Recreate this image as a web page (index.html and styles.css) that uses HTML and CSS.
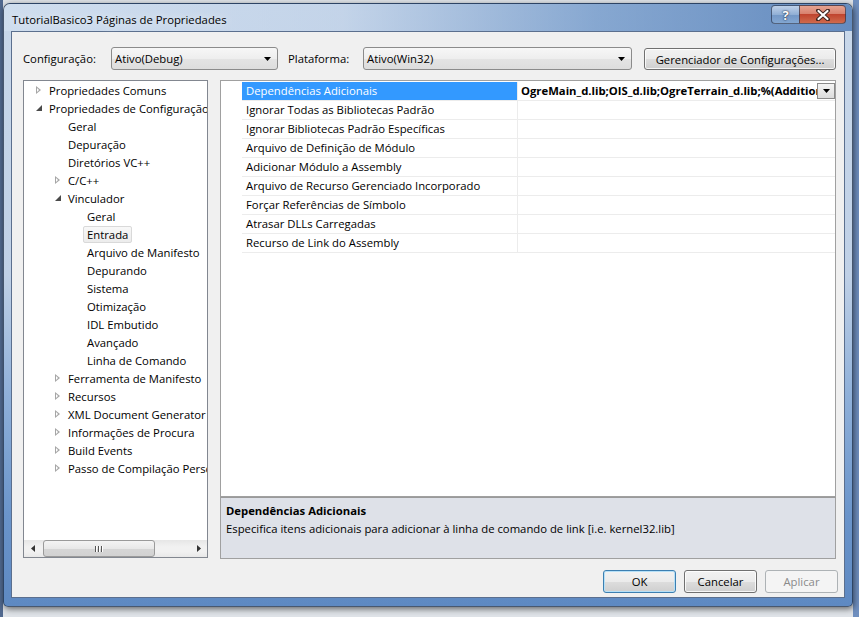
FILE: index.html
```html
<!DOCTYPE html>
<html lang="pt">

<head>
    <meta charset="UTF-8">
    <title>TutorialBasico3 Páginas de Propriedades</title>
    <link rel="stylesheet" href="styles.css">
</head>

<body>

    <div class="window">
        <div class="titlebar">
            <span class="title">TutorialBasico3 Páginas de Propriedades</span>
            <div class="caption_btns">
                <span class="cap help">?</span>
                <span class="cap close">
                    <svg width="14" height="12" viewBox="0 0 14 12">
                        <path d="M2 1.5 L12 10.5 M12 1.5 L2 10.5" stroke="#3b2420" stroke-width="4" stroke-linecap="round" />
                        <path d="M2.5 2 L11.5 10 M11.5 2 L2.5 10" stroke="#fff" stroke-width="2.2" stroke-linecap="round" />
                    </svg>
                </span>
            </div>
        </div>

        <div class="client">
            <div class="toolbar">
                <label class="lbl_config">Configuração:</label>
                <div class="combo combo_config">
                    <span>Ativo(Debug)</span>
                    <svg width="7" height="4" viewBox="0 0 7 4"><path d="M0 0 H7 L3.5 4 Z" fill="#000" /></svg>
                </div>
                <label class="lbl_plat">Plataforma:</label>
                <div class="combo combo_plat">
                    <span>Ativo(Win32)</span>
                    <svg width="7" height="4" viewBox="0 0 7 4"><path d="M0 0 H7 L3.5 4 Z" fill="#000" /></svg>
                </div>
                <button class="btn btn_manager">Gerenciador de Configurações...</button>
            </div>

            <div class="main">
                <div class="tree">
                    <ul class="tree_items">
                        <li class="lvl0"><span class="exp closed"></span>Propriedades Comuns</li>
                        <li class="lvl0"><span class="exp open"></span>Propriedades de Configuração</li>
                        <li class="lvl1"><span class="exp"></span>Geral</li>
                        <li class="lvl1"><span class="exp"></span>Depuração</li>
                        <li class="lvl1"><span class="exp"></span>Diretórios VC++</li>
                        <li class="lvl1"><span class="exp closed"></span>C/C++</li>
                        <li class="lvl1"><span class="exp open"></span>Vinculador</li>
                        <li class="lvl2"><span class="exp"></span>Geral</li>
                        <li class="lvl2"><span class="exp"></span><span class="sel">Entrada</span></li>
                        <li class="lvl2"><span class="exp"></span>Arquivo de Manifesto</li>
                        <li class="lvl2"><span class="exp"></span>Depurando</li>
                        <li class="lvl2"><span class="exp"></span>Sistema</li>
                        <li class="lvl2"><span class="exp"></span>Otimização</li>
                        <li class="lvl2"><span class="exp"></span>IDL Embutido</li>
                        <li class="lvl2"><span class="exp"></span>Avançado</li>
                        <li class="lvl2"><span class="exp"></span>Linha de Comando</li>
                        <li class="lvl1"><span class="exp closed"></span>Ferramenta de Manifesto</li>
                        <li class="lvl1"><span class="exp closed"></span>Recursos</li>
                        <li class="lvl1"><span class="exp closed"></span>XML Document Generator</li>
                        <li class="lvl1"><span class="exp closed"></span>Informações de Procura</li>
                        <li class="lvl1"><span class="exp closed"></span>Build Events</li>
                        <li class="lvl1"><span class="exp closed"></span>Passo de Compilação Personalizada</li>
                    </ul>
                    <div class="hscroll">
                        <span class="sb_arrow">
                            <svg width="4" height="7" viewBox="0 0 4 7"><path d="M4 0 V7 L0 3.5 Z" fill="#333" /></svg>
                        </span>
                        <span class="sb_thumb"><i></i><i></i><i></i></span>
                        <span class="sb_track"></span>
                        <span class="sb_arrow">
                            <svg width="4" height="7" viewBox="0 0 4 7"><path d="M0 0 V7 L4 3.5 Z" fill="#333" /></svg>
                        </span>
                    </div>
                </div>

                <div class="props">
                    <div class="grid">
                        <div class="grid_row selected">
                            <div class="name">Dependências Adicionais</div>
                            <div class="value">
                                <span class="value_text">OgreMain_d.lib;OIS_d.lib;OgreTerrain_d.lib;%(AdditionalDependencies)</span>
                                <span class="drop">
                                    <svg width="7" height="4" viewBox="0 0 7 4"><path d="M0 0 H7 L3.5 4 Z" fill="#000" /></svg>
                                </span>
                            </div>
                        </div>
                        <div class="grid_row"><div class="name">Ignorar Todas as Bibliotecas Padrão</div><div class="value"></div></div>
                        <div class="grid_row"><div class="name">Ignorar Bibliotecas Padrão Específicas</div><div class="value"></div></div>
                        <div class="grid_row"><div class="name">Arquivo de Definição de Módulo</div><div class="value"></div></div>
                        <div class="grid_row"><div class="name">Adicionar Módulo a Assembly</div><div class="value"></div></div>
                        <div class="grid_row"><div class="name">Arquivo de Recurso Gerenciado Incorporado</div><div class="value"></div></div>
                        <div class="grid_row"><div class="name">Forçar Referências de Símbolo</div><div class="value"></div></div>
                        <div class="grid_row"><div class="name">Atrasar DLLs Carregadas</div><div class="value"></div></div>
                        <div class="grid_row"><div class="name">Recurso de Link do Assembly</div><div class="value"></div></div>
                    </div>
                    <div class="desc">
                        <div class="desc_title">Dependências Adicionais</div>
                        <div class="desc_text">Especifica itens adicionais para adicionar à linha de comando de link [i.e. kernel32.lib]</div>
                    </div>
                </div>
            </div>

            <div class="footer">
                <button class="btn btn_default">OK</button>
                <button class="btn">Cancelar</button>
                <button class="btn" disabled>Aplicar</button>
            </div>
        </div>
    </div>

</body>

</html>
```

FILE: styles.css
```css
body {
    margin: 0;
    padding: 3px 0 0 3px;
    width: 859px;
    height: 617px;
    box-sizing: border-box;
    overflow: hidden;
    font-family: "Open Sans", "Noto Sans", sans-serif;
    font-size: 11.3px;
    color: #000;
    background: linear-gradient(90deg, #51698f 0px, #51698f 3px, #dfe3e8 3px, #dfe3e8 853px, #6f8fbf 853px);
}

.window {
    width: 850px;
    height: 604px;
    box-sizing: border-box;
    padding: 0 7px;
    border: 1px solid rgba(30, 45, 70, 0.75);
    border-radius: 7px 7px 5px 5px;
    background: linear-gradient(180deg, #c9d8ea 0%, #bfd0e6 45%, #8fb0d9 65%, #6a94ca 85%, #5e89c2 100%);
    box-shadow: 1px 2px 6px rgba(0, 0, 0, 0.55);
}

.titlebar {
    display: flex;
    height: 27px;
    margin: 0 -7px;
    padding: 0 6px 0 8px;
    border-radius: 6px 6px 0 0;
    background: linear-gradient(90deg, rgba(210, 224, 240, 0.7) 0%, rgba(190, 208, 232, 0.5) 40%, rgba(90, 135, 192, 0.6) 70%, rgba(75, 120, 180, 0.8) 100%);
}

.title {
    padding-top: 8px;
    font-size: 11.3px;
    color: #000;
    text-shadow: 0 0 8px rgba(255, 255, 255, 0.9);
}

.caption_btns {
    display: flex;
    margin-left: auto;
    margin-top: 1px;
    height: 19px;
}

.cap {
    display: flex;
    align-items: center;
    justify-content: center;
    height: 19px;
    box-sizing: border-box;
    border: 1px solid rgba(40, 55, 80, 0.7);
}

.help {
    width: 28px;
    border-radius: 4px 0 0 4px;
    border-right: none;
    background: linear-gradient(180deg, rgba(225, 235, 248, 0.7) 0%, rgba(170, 195, 225, 0.6) 50%, rgba(120, 155, 200, 0.6) 51%, rgba(140, 175, 215, 0.7) 100%);
    color: #fff;
    font-weight: bold;
    font-size: 13px;
    text-shadow: 0 0 2px #1c2a40, 0 0 1px #1c2a40;
}

.close {
    width: 47px;
    border-radius: 0 4px 4px 0;
    background: linear-gradient(180deg, #e6a391 0%, #d8826e 45%, #c0452f 50%, #cf6a4c 100%);
}

.client {
    height: 567px;
    box-sizing: border-box;
    border: 1px solid #5b6f8e;
    background: #f0f0f0;
    padding: 15px 0 0 11px;
}

.toolbar {
    display: flex;
    align-items: center;
    height: 23px;
}

.toolbar label {
    display: block;
}

.lbl_config {
    width: 88px;
}

.lbl_plat {
    width: 75px;
    margin-left: 10px;
}

.combo {
    display: flex;
    align-items: center;
    justify-content: space-between;
    height: 23px;
    box-sizing: border-box;
    padding: 0 6px 0 3px;
    border: 1px solid #8b8b8b;
    border-radius: 3px;
    background: linear-gradient(180deg, #f7f7f7 0%, #eeeeee 50%, #e4e4e4 51%, #dddddd 100%);
}

.combo_config {
    width: 167px;
}

.combo_plat {
    width: 269px;
}

.btn {
    height: 23px;
    box-sizing: border-box;
    padding: 0;
    font-family: inherit;
    font-size: 11.3px;
    color: #000;
    border: 1px solid #707070;
    border-radius: 3px;
    background: linear-gradient(180deg, #f2f2f2 0%, #ebebeb 50%, #dddddd 51%, #cfcfcf 100%);
    box-shadow: inset 0 0 0 1px rgba(255, 255, 255, 0.8);
}

.btn_manager {
    width: 192px;
    height: 22px;
    margin-left: 12px;
    margin-top: 1px;
}

.main {
    display: flex;
    align-items: flex-start;
    margin-top: 10px;
}

.tree {
    display: flex;
    flex-direction: column;
    width: 185px;
    height: 478px;
    box-sizing: border-box;
    border: 1px solid #828790;
    background: #fff;
    overflow: hidden;
}

.tree_items {
    flex: 1;
    margin: 0;
    padding: 0;
    list-style: none;
    overflow: hidden;
}

.tree_items li {
    display: flex;
    align-items: center;
    height: 18px;
    white-space: nowrap;
}

.lvl0 {
    padding-left: 12px;
}

.lvl1 {
    padding-left: 31px;
}

.lvl2 {
    padding-left: 50px;
}

.exp {
    flex: none;
    width: 13px;
    height: 18px;
    position: relative;
}

.exp.closed::before {
    content: "";
    position: absolute;
    left: 0;
    top: 5px;
    width: 0;
    height: 0;
    border-style: solid;
    border-width: 4px 0 4px 5px;
    border-color: transparent transparent transparent #a6a6a6;
}

.exp.closed::after {
    content: "";
    position: absolute;
    left: 1px;
    top: 7px;
    width: 0;
    height: 0;
    border-style: solid;
    border-width: 2px 0 2px 2.5px;
    border-color: transparent transparent transparent #fff;
}

.exp.open::before {
    content: "";
    position: absolute;
    left: 0;
    top: 6px;
    width: 0;
    height: 0;
    border-style: solid;
    border-width: 0 0 6px 6px;
    border-color: transparent transparent #4a4a4a transparent;
}

.sel {
    margin-left: -4px;
    padding: 0 3px;
    line-height: 15px;
    border: 1px solid #d9d9d9;
    border-radius: 2px;
    background: linear-gradient(180deg, #f8f8f8, #ececec);
}

.hscroll {
    display: flex;
    height: 17px;
    background: linear-gradient(180deg, #e6e6e6, #f1f1f1 40%, #f1f1f1 70%, #e8e8e8);
}

.sb_arrow {
    display: flex;
    align-items: center;
    justify-content: center;
    width: 17px;
}

.sb_thumb {
    display: flex;
    align-items: center;
    justify-content: center;
    gap: 1px;
    width: 112px;
    margin: 0 0 0 2px;
    box-sizing: border-box;
    border: 1px solid #9a9a9a;
    border-radius: 3px;
    background: linear-gradient(180deg, #f4f4f4 0%, #e8e8e8 50%, #d6d6d6 51%, #d2d2d2 100%);
}

.sb_thumb i {
    width: 1px;
    height: 6px;
    background: #555;
    border-right: 1px solid #fff;
}

.sb_track {
    flex: 1;
}

.props {
    display: flex;
    flex-direction: column;
    width: 616px;
    height: 479px;
    margin-left: 12px;
}

.grid {
    height: 417px;
    box-sizing: border-box;
    border: 1px solid #a0a0a0;
    background: #fff;
    padding: 1px 0 0 21px;
}

.grid_row {
    display: flex;
    height: 19px;
    box-sizing: border-box;
    border-bottom: 1px solid #ececec;
}

.name {
    width: 275px;
    padding-left: 4px;
    box-sizing: border-box;
    line-height: 18px;
    white-space: nowrap;
    overflow: hidden;
}

.value {
    display: flex;
    flex: 1;
    min-width: 0;
    border-left: 1px solid #ececec;
}

.selected .name {
    background: #3399ff;
    color: #fff;
}

.value_text {
    flex: 1;
    min-width: 0;
    padding-left: 3px;
    font-weight: bold;
    line-height: 18px;
    white-space: nowrap;
    overflow: hidden;
}

.drop {
    display: flex;
    align-items: center;
    justify-content: center;
    width: 18px;
    height: 16px;
    margin: 1px 0 0 0;
    box-sizing: border-box;
    border: 1px solid #8a8a8a;
    background: linear-gradient(180deg, #f4f4f4, #dcdcdc);
}

.desc {
    flex: 1;
    box-sizing: border-box;
    border: 1px solid #a0a0a0;
    border-top: 1px solid #9a9a9a;
    background: #dee1e8;
    padding: 4px 5px;
    line-height: 18px;
}

.desc_title {
    font-weight: bold;
}

.footer {
    display: flex;
    justify-content: flex-end;
    gap: 8px;
    margin-top: 11px;
    padding-right: 6px;
}

.footer .btn {
    width: 73px;
}

.btn_default {
    border-color: #3c7fb1;
    box-shadow: inset 0 0 0 1px #b6e0f7;
}

.btn:disabled {
    color: #8a8a8a;
    border-color: #adb2b5;
    background: #f4f4f4;
    box-shadow: none;
}
```
